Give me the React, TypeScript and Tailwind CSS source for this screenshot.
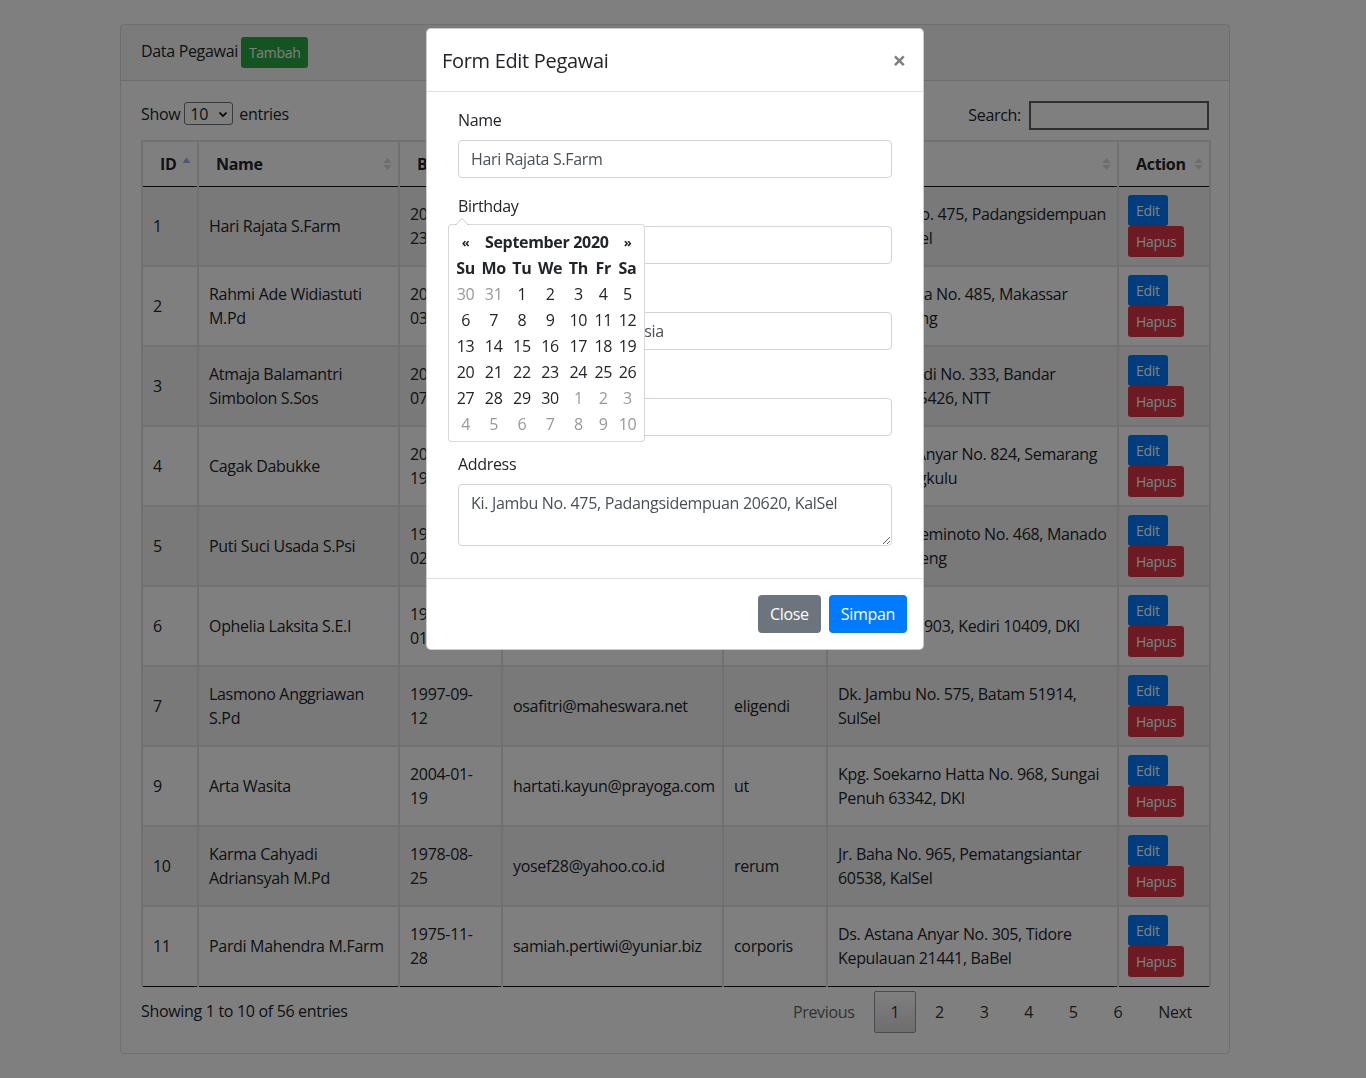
type Row = {
  id: string;
  name: string;
  birthday: string;
  email: string;
  job: string;
  address: string;
};

const rows: Row[] = [
  { id: "1", name: "Hari Rajata S.Farm", birthday: "2001-02-23", email: "purwanti@situmorang.asia", job: "quia", address: "Ki. Jambu No. 475, Padangsidempuan 20620, KalSel" },
  { id: "2", name: "Rahmi Ade Widiastuti M.Pd", birthday: "2009-11-03", email: "gunawan.nadia@yahoo.com", job: "dolor", address: "Gg. Suniaraja No. 485, Makassar 39421, JaTeng" },
  { id: "3", name: "Atmaja Balamantri Simbolon S.Sos", birthday: "2015-06-07", email: "ihidayat@lestari.co.id", job: "nihil", address: "Dk. Setia Budi No. 333, Bandar Lampung 15426, NTT" },
  { id: "4", name: "Cagak Dabukke", birthday: "2003-12-19", email: "wulan.saragih@gmail.com", job: "quas", address: "Jln. Astana Anyar No. 824, Semarang 54321, Bengkulu" },
  { id: "5", name: "Puti Suci Usada S.Psi", birthday: "1989-04-02", email: "cahya81@nasyidah.biz", job: "et", address: "Ds. Kartosoeminoto No. 468, Manado 86375, KalTeng" },
  { id: "6", name: "Ophelia Laksita S.E.I", birthday: "1994-10-01", email: "tari.h@yahoo.co.id", job: "magni", address: "Gg. Bali No. 903, Kediri 10409, DKI" },
  { id: "7", name: "Lasmono Anggriawan S.Pd", birthday: "1997-09-12", email: "osafitri@maheswara.net", job: "eligendi", address: "Dk. Jambu No. 575, Batam 51914, SulSel" },
  { id: "9", name: "Arta Wasita", birthday: "2004-01-19", email: "hartati.kayun@prayoga.com", job: "ut", address: "Kpg. Soekarno Hatta No. 968, Sungai Penuh 63342, DKI" },
  { id: "10", name: "Karma Cahyadi Adriansyah M.Pd", birthday: "1978-08-25", email: "yosef28@yahoo.co.id", job: "rerum", address: "Jr. Baha No. 965, Pematangsiantar 60538, KalSel" },
  { id: "11", name: "Pardi Mahendra M.Farm", birthday: "1975-11-28", email: "samiah.pertiwi@yuniar.biz", job: "corporis", address: "Ds. Astana Anyar No. 305, Tidore Kepulauan 21441, BaBel" },
];

const columns = [
  { label: "ID", width: "w-[56px]", sort: "asc" },
  { label: "Name", width: "w-[201px]", sort: "both" },
  { label: "Birthday", width: "w-[103px]", sort: "both" },
  { label: "Email", width: "w-[221px]", sort: "both" },
  { label: "Job", width: "w-[104px]", sort: "both" },
  { label: "Address", width: "w-[291px]", sort: "both" },
  { label: "Action", width: "w-[92px]", sort: "both" },
];

const calDays = [
  ...[30, 31].map((d) => ({ d, muted: true })),
  ...Array.from({ length: 30 }, (_, i) => ({ d: i + 1, muted: false })),
  ...Array.from({ length: 10 }, (_, i) => ({ d: i + 1, muted: true })),
];
const weeks = Array.from({ length: 6 }, (_, w) => calDays.slice(w * 7, w * 7 + 7));

const SortIcon = ({ type }: { type: string }) => (
  <svg className="absolute right-[6px] top-1/2 -translate-y-1/2" width="9" height="15" viewBox="0 0 9 15">
    <path d="M4.5 1 8.5 6.5H0.5Z" fill={type === "asc" ? "#a9a9f5" : "#dcdcdc"} />
    {type === "both" && <path d="M4.5 14 8.5 8.5H0.5Z" fill="#dcdcdc" />}
  </svg>
);

const DatePicker = () => (
  <div className="absolute left-[-10px] top-[30px] z-10 rounded-[4px] border border-black/15 bg-white p-1">
    <span className="absolute -top-[7px] left-[6px] h-0 w-0 border-x-[7px] border-b-[7px] border-x-transparent border-b-black/20" />
    <span className="absolute -top-[6px] left-[7px] h-0 w-0 border-x-[6px] border-b-[6px] border-x-transparent border-b-white" />
    <table className="border-collapse text-center text-[#212529]">
      <thead>
        <tr className="h-[26px]">
          <th className="px-[3.25px] text-[13px]">«</th>
          <th colSpan={5} className="px-[3.25px] font-bold">September 2020</th>
          <th className="px-[3.25px] text-[13px]">»</th>
        </tr>
        <tr className="h-[26px]">
          {["Su", "Mo", "Tu", "We", "Th", "Fr", "Sa"].map((d) => (
            <th key={d} className="px-[3.25px] font-bold">{d}</th>
          ))}
        </tr>
      </thead>
      <tbody>
        {weeks.map((week, i) => (
          <tr key={i} className="h-[26px]">
            {week.map((day, j) => (
              <td key={j} className={`px-[3.25px] ${day.muted ? "text-[#999]" : ""}`}>{day.d}</td>
            ))}
          </tr>
        ))}
      </tbody>
    </table>
  </div>
);

const Field = ({ label, value, children }: { label: string; value: string; children?: React.ReactNode }) => (
  <div className="relative mb-4">
    <div className="mb-2">{label}</div>
    <div className="flex h-[38px] items-center overflow-hidden whitespace-nowrap rounded-[4px] border border-[#ced4da] px-3 text-[#495057]">{value}</div>
    {children}
  </div>
);

export default function App() {
  return (
    <div className="relative h-[1078px] overflow-hidden bg-white font-['Open_Sans',sans-serif] text-base leading-6 tracking-[-0.02em] text-[#212529]">
      <div className="ml-[120px] pt-6 w-[1110px]">
        <div className="rounded-[4px] border border-black/[.125]">
          <div className="flex items-center gap-[3px] border-b border-black/[.125] bg-black/[.03] px-5 py-3">
            <span className="-mt-[3px]">Data Pegawai</span>
            <span className="rounded-[3px] bg-[#28a745] px-2 py-1 text-sm leading-[23px] text-white">Tambah</span>
          </div>

          <div className="px-5 pb-5 pt-[19px]">
            <div className="flex h-[30px] items-center justify-between">
              <div className="-mt-[3px] flex items-center">
                <span>Show</span>
                <div className="ml-1 mr-1.5 flex h-[23px] w-[49px] items-center justify-between rounded-[3px] border border-[#767676] bg-white pl-[5px] pr-[4px]">
                  <span>10</span>
                  <svg width="10" height="10" viewBox="0 0 10 10">
                    <path d="M1.5 3.5 5 7 8.5 3.5" fill="none" stroke="#000" strokeWidth="1.7" />
                  </svg>
                </div>
                <span>entries</span>
              </div>
              <div className="flex items-center">
                <span>Search:</span>
                <div className="ml-2 h-[29px] w-[180px] border-2 border-[#5c5c5c] bg-white" />
              </div>
            </div>

            <table className="mt-[10px] w-full table-fixed border-collapse border-x-2 border-t-2 border-[#dee2e6]">
              <thead>
                <tr>
                  {columns.map((c) => (
                    <th
                      key={c.label}
                      className={`${c.width} relative h-[45px] border-x-2 border-t-2 border-b border-[#dee2e6] border-b-[#111] pl-[17px] pr-[20px] text-left font-bold`}
                    >
                      {c.label}
                      <SortIcon type={c.sort} />
                    </th>
                  ))}
                </tr>
              </thead>
              <tbody>
                {rows.map((r, i) => {
                  const last = i === rows.length - 1;
                  const td = `border-x-2 border-t-0 px-[10px] align-middle border-[#dee2e6] ${last ? "border-b border-b-[#111]" : "border-b-2"}`;
                  return (
                    <tr key={r.id} className={`h-[80px] ${i % 2 === 0 ? "bg-black/[.05]" : ""}`}>
                      <td className={td}>{r.id}</td>
                      <td className={td}>{r.name}</td>
                      <td className={td}>
                        <span className="block max-w-[74px]">{r.birthday}</span>
                      </td>
                      <td className={td}>{r.email}</td>
                      <td className={td}>{r.job}</td>
                      <td className={td}>{r.address}</td>
                      <td className={td}>
                        <div className="-ml-px flex flex-col items-start">
                          <span className="rounded-[3px] bg-[#007bff] px-2 py-1 text-sm leading-[23px] text-white">Edit</span>
                          <span className="rounded-[3px] bg-[#dc3545] px-2 py-1 text-sm leading-[23px] text-white">Hapus</span>
                        </div>
                      </td>
                    </tr>
                  );
                })}
              </tbody>
            </table>

            <div className="mt-[4px] flex items-center justify-between">
              <span className="-mt-[2px]">Showing 1 to 10 of 56 entries</span>
              <div className="flex items-center text-[#333]">
                <span className="border border-transparent px-4 py-2 text-[#666]">Previous</span>
                <span className="ml-[2px] flex h-[42px] w-[42.6px] items-center justify-center rounded-[2px] border border-[#979797] bg-gradient-to-b from-white to-[#dcdcdc]">1</span>
                {["2", "3", "4", "5", "6"].map((p) => (
                  <span key={p} className="ml-[2px] flex h-[42px] w-[42.6px] items-center justify-center border border-transparent">{p}</span>
                ))}
                <span className="ml-[2px] border border-transparent px-4 py-2">Next</span>
              </div>
            </div>
          </div>
        </div>
      </div>

      <div className="fixed inset-0 bg-black/50" />

      <div className="fixed inset-0">
        <div className="ml-[426px] mt-[28px] w-[498px] rounded-[5px] border border-black/20 bg-white">
          <div className="flex items-start justify-between border-b border-[#dee2e6] p-4">
            <h5 className="text-xl font-medium leading-[30px] -ml-px translate-y-px">Form Edit Pegawai</h5>
            <span className="mr-[1px] text-2xl font-bold leading-[30px] text-black opacity-50">×</span>
          </div>
          <div className="p-4">
            <div className="px-[15px]">
              <Field label="Name" value="Hari Rajata S.Farm" />
              <Field label="Birthday" value="2001-02-23">
                <DatePicker />
              </Field>
              <Field label="Email" value="purwanti@situmorang.asia" />
              <Field label="Job" value="quia" />
              <div className="mb-4">
                <div className="mb-2">Address</div>
                <textarea
                  readOnly
                  rows={2}
                  className="block h-[62px] w-full rounded-[4px] border border-[#ced4da] px-3 py-1.5 text-[#495057] outline-none"
                  defaultValue="Ki. Jambu No. 475, Padangsidempuan 20620, KalSel"
                />
              </div>
            </div>
          </div>
          <div className="flex justify-end gap-2 border-t border-[#dee2e6] p-4">
            <span className="rounded-[4px] bg-[#6c757d] px-3 py-1.5 leading-[26px] text-white">Close</span>
            <span className="rounded-[4px] bg-[#007bff] px-3 py-1.5 leading-[26px] text-white">Simpan</span>
          </div>
        </div>
      </div>
    </div>
  );
}
